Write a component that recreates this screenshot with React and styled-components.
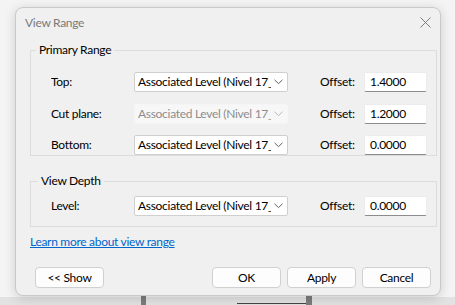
import React from "react";
import styled, { createGlobalStyle } from "styled-components";

const Global = createGlobalStyle`
  html, body { margin: 0; padding: 0; }
  body {
    background: #f4f4f4;
    font-family: Lato, "Noto Sans", sans-serif;
    font-size: 12px;
    letter-spacing: -0.3px;
    line-height: 16px;
    color: #000;
    width: 455px;
    height: 305px;
    overflow: hidden;
  }
`;

const Page = styled.div`
  position: relative;
  width: 455px;
  height: 305px;
  padding: 7px 0 0 15px;
  box-sizing: border-box;
`;

const Backdrop = styled.svg`
  position: absolute;
  left: 0;
  top: 0;
  width: 455px;
  height: 305px;
`;

const Window = styled.div`
  position: relative;
  width: 426px;
  height: 289px;
  box-sizing: border-box;
  background: #f0f0f0;
  border: 1px solid #c9c9c9;
  border-radius: 8px;
  box-shadow: 0 2px 12px rgba(0, 0, 0, 0.16);
  display: flex;
  flex-direction: column;
`;

const TitleBar = styled.div`
  height: 29px;
  display: flex;
  align-items: center;
  justify-content: space-between;
  padding: 0 9px 0 9px;
  color: #7a7a7a;
`;

const Body = styled.div`
  padding: 0 3px 0 14px;
  display: flex;
  flex-direction: column;
`;

const Group = styled.fieldset`
  margin: ${(p) => p.$mt}px 0 0 0;
  padding: 0 0 ${(p) => p.$pb}px 20px;
  border: 1px solid #dcdcdc;
  min-width: 0;
`;

const Legend = styled.legend`
  padding: 0 3px;
  margin-left: ${(p) => p.$ml}px;
  line-height: 16px;
  color: #000;
`;

const Rows = styled.div`
  display: grid;
  grid-template-columns: 83px 154px 32px 44px 63px;
  grid-auto-rows: 20px;
  row-gap: ${(p) => p.$gap}px;
  margin-top: ${(p) => p.$mt}px;
  align-items: center;
`;

const Label = styled.div`
  white-space: nowrap;
`;

const Combo = styled.div`
  height: 20px;
  box-sizing: border-box;
  border: 1px solid ${(p) => (p.$disabled ? "#f5f5f5" : "#cfcfcf")};
  border-radius: 2px;
  background: ${(p) => (p.$disabled ? "#f7f7f7" : "#ffffff")};
  color: ${(p) => (p.$disabled ? "#8d8d8d" : "#000")};
  display: flex;
  align-items: center;
  padding: 0 4px 0 3px;
  overflow: hidden;
`;

const ComboText = styled.span`
  flex: 1;
  white-space: nowrap;
  overflow: hidden;
  text-overflow: clip;
  margin-right: 3px;
`;

const Offset = styled.div`
  grid-column: 4;
`;

const Input = styled.div`
  height: 20px;
  box-sizing: border-box;
  background: #fff;
  border: 1px solid #ececec;
  border-bottom: 1px solid #8c8c8c;
  border-radius: 2px;
  padding: 0 5px;
  display: flex;
  align-items: center;
`;

const Link = styled.a`
  color: #0066cc;
  text-decoration: underline;
  margin-top: 7px;
  line-height: 16px;
  cursor: pointer;
  align-self: flex-start;
`;

const Footer = styled.div`
  display: flex;
  align-items: center;
  margin-top: 17px;
  padding-right: 9px;
  padding-left: 19px;
  gap: 6px;
`;

const Button = styled.button`
  width: 69px;
  height: 21px;
  box-sizing: border-box;
  background: #fdfdfd;
  border: 1px solid #d0d0d0;
  border-radius: 4px;
  font: inherit;
  letter-spacing: inherit;
  color: #000;
  padding: 0;
  ${(p) => p.$push && "margin-left: auto;"}
`;

const Chevron = ({ color }) => (
  <svg width="9" height="6" viewBox="0 0 9 6">
    <path d="M0.5 0.8 L4.5 4.6 L8.5 0.8" fill="none" stroke={color} strokeWidth="1" />
  </svg>
);

const CloseIcon = () => (
  <svg width="11" height="11" viewBox="0 0 11 11">
    <path d="M0.5 0.5 L10.5 10.5 M10.5 0.5 L0.5 10.5" stroke="#7d7d7d" strokeWidth="1" />
  </svg>
);

const LevelCombo = ({ disabled }) => (
  <Combo $disabled={disabled}>
    <ComboText>Associated Level (Nivel 17_Nivel</ComboText>
    <Chevron color={disabled ? "#b8b8b8" : "#606060"} />
  </Combo>
);

const Row = ({ label, value, disabled }) => (
  <>
    <Label>{label}</Label>
    <LevelCombo disabled={disabled} />
    <Offset>Offset:</Offset>
    <Input>{value}</Input>
  </>
);

export default function App() {
  return (
    <>
      <Global />
      <Page>
        <Backdrop viewBox="0 0 455 305">
          <rect x="0" y="297" width="455" height="8" fill="#e2e2e2" />
          <rect x="141" y="296" width="5" height="9" fill="#7c7c7c" />
          <rect x="306" y="296" width="6" height="9" fill="#7c7c7c" />
          <line x1="237" y1="303.5" x2="306" y2="303.5" stroke="#444" strokeWidth="1" />
        </Backdrop>
        <Window>
          <TitleBar>
            <span>View Range</span>
            <CloseIcon />
          </TitleBar>
          <Body>
            <Group $mt={5} $pb={0}>
              <Legend $ml={-15}>Primary Range</Legend>
              <Rows $gap={11.5} $mt={14}>
                <Row label="Top:" value="1.4000" />
                <Row label="Cut plane:" value="1.2000" disabled />
                <Row label="Bottom:" value="0.0000" />
              </Rows>
            </Group>
            <Group $mt={17} $pb={10}>
              <Legend $ml={-13}>View Depth</Legend>
              <Rows $gap={0} $mt={7}>
                <Row label="Level:" value="0.0000" />
              </Rows>
            </Group>
            <Link>Learn more about view range</Link>
          </Body>
          <Footer>
            <Button>&lt;&lt; Show</Button>
            <Button $push>OK</Button>
            <Button>Apply</Button>
            <Button>Cancel</Button>
          </Footer>
        </Window>
      </Page>
    </>
  );
}
